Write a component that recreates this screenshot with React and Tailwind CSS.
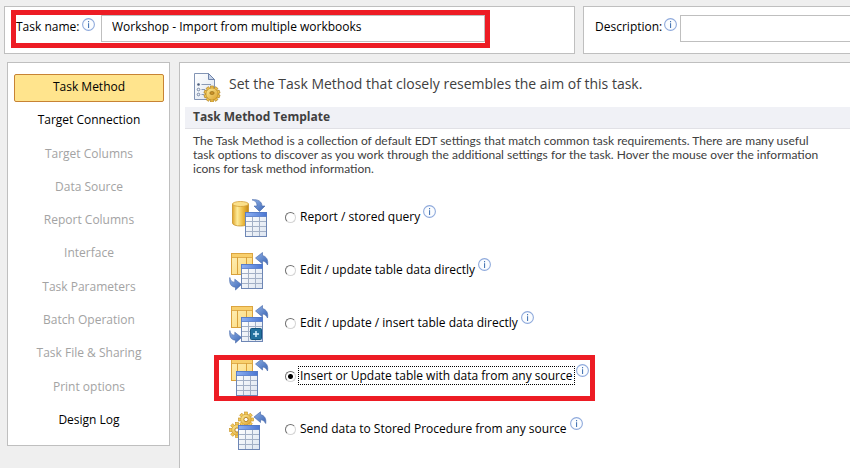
import React, { useState } from "react";

const navItems = [
    { name: "Task Method", enabled: true },
    { name: "Target Connection", enabled: true },
    { name: "Target Columns", enabled: false },
    { name: "Data Source", enabled: false },
    { name: "Report Columns", enabled: false },
    { name: "Interface", enabled: false },
    { name: "Task Parameters", enabled: false },
    { name: "Batch Operation", enabled: false },
    { name: "Task File & Sharing", enabled: false },
    { name: "Print options", enabled: false },
    { name: "Design Log", enabled: true },
];

const methods = [
    { id: "report", label: "Report / stored query" },
    { id: "edit", label: "Edit / update table data directly" },
    { id: "editInsert", label: "Edit / update / insert table data directly" },
    { id: "insert", label: "Insert or Update table with data from any source" },
    { id: "procedure", label: "Send data to Stored Procedure from any source" },
];

const InfoIcon = () => (
    <svg viewBox="0 0 13 13" className="w-[13px] h-[13px] shrink-0" fill="none">
        <circle cx="6.5" cy="6.5" r="5.9" fill="#fbfdff" stroke="#8faadc" strokeWidth="1.1" />
        <rect x="6" y="3" width="1.1" height="1.3" fill="#4a78b5" />
        <rect x="6" y="5.2" width="1.1" height="4.8" fill="#4a78b5" />
    </svg>
);

// Shared gradients for all the method icons
const IconDefs = () => (
    <svg width="0" height="0" className="absolute" aria-hidden="true">
        <defs>
            <linearGradient id="gold" x1="0" x2="1" y1="0" y2="0">
                <stop offset="0" stopColor="#e0a52a" />
                <stop offset="0.3" stopColor="#fdeb9a" />
                <stop offset="0.65" stopColor="#edbc42" />
                <stop offset="1" stopColor="#c48918" />
            </linearGradient>
            <linearGradient id="sheet" x1="0" x2="1" y1="0" y2="1">
                <stop offset="0" stopColor="#ffffff" />
                <stop offset="1" stopColor="#dde5f0" />
            </linearGradient>
            <linearGradient id="yellowSheet" x1="0" x2="1" y1="0" y2="1">
                <stop offset="0" stopColor="#fff0b8" />
                <stop offset="1" stopColor="#fbd774" />
            </linearGradient>
            <linearGradient id="blueHead" x1="0" x2="1" y1="0" y2="0">
                <stop offset="0" stopColor="#8db0f2" />
                <stop offset="1" stopColor="#4a76d2" />
            </linearGradient>
            <linearGradient id="arrow" x1="0" x2="1" y1="0" y2="1">
                <stop offset="0" stopColor="#8fb0e6" />
                <stop offset="1" stopColor="#3c66b4" />
            </linearGradient>
            <linearGradient id="gearFill" x1="0" x2="1" y1="0" y2="1">
                <stop offset="0" stopColor="#fdeb9a" />
                <stop offset="1" stopColor="#dba02a" />
            </linearGradient>
        </defs>
    </svg>
);

const BlueTable = ({ x, y }) => (
    <g transform={`translate(${x} ${y})`}>
        <rect x="0.5" y="0.5" width="21" height="24" fill="url(#sheet)" stroke="#6d86b5" />
        <rect x="0.5" y="0.5" width="21" height="4" fill="url(#blueHead)" stroke="#5279c8" strokeWidth="0.8" />
        <path d="M1 9.5H21M1 14.5H21M1 19.5H21M7.5 5V24M14.5 5V24" stroke="#a3b0c6" />
    </g>
);

const YellowTable = () => (
    <g>
        <rect x="2.5" y="1.5" width="21" height="21" fill="url(#yellowSheet)" stroke="#d9a13c" />
        <rect x="2.5" y="1.5" width="21" height="4" fill="#f8cf6c" stroke="#d9a13c" strokeWidth="0.8" />
        <path d="M8.5 5V22M17.5 5V22" stroke="#d9a13c" />
    </g>
);

// Curved arrow pointing left at the top right corner
const ArrowBack = () => (
    <path d="M26.5 6 L33.5 0.5 V3.5 C37.5 4.5 39.5 8 38.5 13 C37.3 10.3 35.8 9.2 33.5 9 V12 Z" fill="url(#arrow)" stroke="#4466a8" strokeWidth="0.6" />
);

const ArrowIn = () => (
    <path d="M0.8 25.5 C1.5 29 3 30.2 5.8 30.2 V27.2 L12.5 32.5 L6.5 38 V35.2 C1.8 35 0 31 0.8 25.5 Z" fill="url(#arrow)" stroke="#4466a8" strokeWidth="0.6" />
);

const Gear = ({ cx, cy, r }) => (
    <g transform={`translate(${cx} ${cy})`}>
        {[0, 45, 90, 135, 180, 225, 270, 315].map(a => (
            <rect key={a} x={-r * 0.2} y={-r} width={r * 0.4} height={r * 0.45} transform={`rotate(${a})`} fill="#f3c955" stroke="#c48f22" strokeWidth="0.6" />
        ))}
        <circle r={r * 0.7} fill="url(#gearFill)" stroke="#c48f22" strokeWidth="0.5" />
        <circle r={r * 0.28} fill="#fff" stroke="#a87410" strokeWidth="0.8" />
    </g>
);

const MethodIcon = ({ id }) => (
    <svg viewBox="0 0 40 40" className="w-10 h-10 shrink-0" fill="none" aria-hidden="true">
        {id === "report" && (
            <>
                <path d="M3.5 5V24C3.5 28 19.5 28 19.5 24V5Z" fill="url(#gold)" stroke="#c8932a" strokeWidth="0.8" />
                <ellipse cx="11.5" cy="5" rx="8" ry="2.5" fill="#fbe08a" stroke="#d3a038" strokeWidth="0.8" />
                <path d="M23 0.8 C29 0 33 2.5 33 7 H36 L30.5 12.5 L25 7 H28 C28 4 27 2 23 0.8 Z" fill="url(#arrow)" stroke="#4466a8" strokeWidth="0.6" />
                <BlueTable x={16} y={13} />
            </>
        )}
        {(id === "edit" || id === "editInsert") && (
            <>
                <YellowTable />
                <ArrowBack />
                <ArrowIn />
                <BlueTable x={12} y={12} />
            </>
        )}
        {id === "editInsert" && (
            <>
                <rect x="21.5" y="23.5" width="11" height="11" rx="1" fill="#23719f" stroke="#155781" />
                <path d="M27 26V32M24 29H30" stroke="#d7efff" strokeWidth="1.5" />
            </>
        )}
        {id === "insert" && (
            <>
                <YellowTable />
                <ArrowBack />
                <BlueTable x={7} y={13} />
            </>
        )}
        {id === "procedure" && (
            <>
                <Gear cx={8} cy={19} r={7.5} />
                <Gear cx={17} cy={8.5} r={7.5} />
                <path d="M25 6 L31.5 0.8 V3.6 C35.5 4.5 37.5 7.5 36.7 12.5 C35.3 10 34 9 31.5 8.8 V11.5 Z" fill="url(#arrow)" stroke="#4466a8" strokeWidth="0.6" />
                <BlueTable x={9} y={14} />
            </>
        )}
    </svg>
);

const TaskIcon = () => (
    <svg viewBox="0 0 28 30" className="w-7 h-[30px] shrink-0" fill="none" aria-hidden="true">
        <path d="M1.5 1.5H15.5L21.5 7.5V27.5H1.5Z" fill="url(#sheet)" stroke="#8294b4" />
        <path d="M15.5 1.5V7.5H21.5Z" fill="#c7d3e8" stroke="#6f84ab" />
        <circle cx="5.5" cy="12.5" r="1.3" fill="#4d5e7c" />
        <circle cx="5.5" cy="17.5" r="1.3" stroke="#6b7d9c" strokeWidth="0.9" />
        <circle cx="5.5" cy="22.5" r="1.3" stroke="#6b7d9c" strokeWidth="0.9" />
        <path d="M8.5 12.5H18M8.5 17.5H12M8.5 22.5H11" stroke="#8a9ab5" />
        {/* gear lying flat in the corner */}
        <g transform="translate(19 22)">
            {[0, 36, 72, 108, 144, 180, 216, 252, 288, 324].map(a => (
                <rect key={a} x="-1.5" y="-8" width="3" height="4" transform={`rotate(${a})`} fill="#eebf48" stroke="#a97a18" strokeWidth="0.6" />
            ))}
            <circle r="6" fill="url(#gearFill)" stroke="#b98518" strokeWidth="0.5" />
            <ellipse cy="-1" rx="2.2" ry="1.5" fill="#c9912a" stroke="#8f640e" strokeWidth="0.6" />
        </g>
    </svg>
);

const App = () => {
    const [taskName, setTaskName] = useState("Workshop - Import from multiple workbooks");
    const [description, setDescription] = useState("");
    const [section, setSection] = useState("Task Method");
    const [method, setMethod] = useState("insert");

    return (
        <div className="min-h-screen bg-[#efefef] pt-[6px] flex flex-col overflow-hidden font-['Open_Sans',sans-serif] text-xs text-black">
            <IconDefs />

            {/* Task name and description */}
            <div className="grid grid-cols-[67.5%_1fr] gap-2 pl-1">
                <div className="h-12 bg-white border border-[#bfbfbf] pt-[3px] pl-[6px] pr-[84px]">
                    <div className="h-[38px] border-5 border-[#ed1c24] flex items-start">
                        <label htmlFor="taskName" className="w-[66px] leading-6 whitespace-nowrap">Task name:</label>
                        <span className="pt-[3px] pr-[6px]"><InfoIcon /></span>
                        <input
                            id="taskName"
                            type="text"
                            value={taskName}
                            onChange={(e) => setTaskName(e.target.value)}
                            className="flex-1 min-w-0 h-[27px] border border-[#bfbfbf] pl-[10px] pb-1 outline-none"
                        />
                    </div>
                </div>
                <div className="h-12 bg-white border border-r-0 border-[#bfbfbf] pt-2 pl-[11px] flex items-start">
                    <label htmlFor="description" className="w-[69px] leading-6 whitespace-nowrap">Description:</label>
                    <span className="pt-[3px] pr-[3px]"><InfoIcon /></span>
                    <input
                        id="description"
                        type="text"
                        value={description}
                        onChange={(e) => setDescription(e.target.value)}
                        className="flex-1 min-w-0 h-[27px] border border-r-0 border-[#bfbfbf] px-2 outline-none"
                    />
                </div>
            </div>

            <div className="flex flex-1 gap-[9px] pl-[7px] pt-2">
                {/* Side menu */}
                <nav className="w-[163px] h-96 shrink-0 bg-white border border-[#bfbfbf] pt-[11px] pb-[10px] pl-[6px] pr-[5px] flex flex-col justify-between">
                    {navItems.map(item => (
                        <button
                            key={item.name}
                            disabled={!item.enabled}
                            onClick={() => setSection(item.name)}
                            className={`h-7 rounded-xs border pb-[2px] ${section === item.name ? "bg-[#ffe48d] border-[#c78334]" : "border-transparent"}
                ${item.enabled ? "text-black" : "text-[#a3a3a3]"}`}
                        >
                            {item.name}
                        </button>
                    ))}
                </nav>

                {/* Task method */}
                <main className="flex-1 min-w-0 bg-white border border-r-0 border-b-0 border-[#bfbfbf] pl-[5px]">
                    <div className="h-11 flex items-start pt-[9px] pl-2 gap-2">
                        <TaskIcon />
                        <h1 className="text-sm leading-6 text-[#404040]">Set the Task Method that closely resembles the aim of this task.</h1>
                    </div>
                    <h2 className="h-[22px] pl-2 bg-[#f0f1f6] border-b border-[#e1e1e6] font-bold text-xs leading-5 text-[#404040]">Task Method Template</h2>
                    <p className="px-2 pt-[5px] font-[Lato,sans-serif] text-xs leading-[14px] text-[#404040]">
                        The Task Method is a collection of default EDT settings that match common task requirements. There are many useful
                        <br />
                        task options to discover as you work through the additional settings for the task. Hover the mouse over the information
                        <br />
                        icons for task method information.
                    </p>

                    <div className="pl-[29px] pt-5 flex flex-col gap-[7px]">
                        {methods.map(m => (
                            <div key={m.id} className={`w-[381px] h-[46px] border-5 pl-[10px] flex items-center ${method === m.id ? "border-[#ed1c24] overflow-hidden" : "border-transparent"}`}>
                                <MethodIcon id={m.id} />
                                <input
                                    type="radio"
                                    name="method"
                                    id={m.id}
                                    checked={method === m.id}
                                    onChange={() => setMethod(m.id)}
                                    className="appearance-none shrink-0 ml-4 mb-1 w-[11px] h-[11px] rounded-full border border-t-[#707070] border-l-[#707070] border-r-[#d4d4d4] border-b-[#d4d4d4] checked:bg-[radial-gradient(circle,#000_2px,#fff_3px)]"
                                />
                                <label
                                    htmlFor={m.id}
                                    className={`ml-[2px] mb-[6px] px-px text-xs leading-[17px] whitespace-nowrap border border-dotted ${method === m.id ? "border-black" : "border-transparent"}`}
                                >
                                    {m.label}
                                </label>
                                <span className="ml-px mb-4"><InfoIcon /></span>
                            </div>
                        ))}
                    </div>
                </main>
            </div>
        </div>
    );
};

export default App;
